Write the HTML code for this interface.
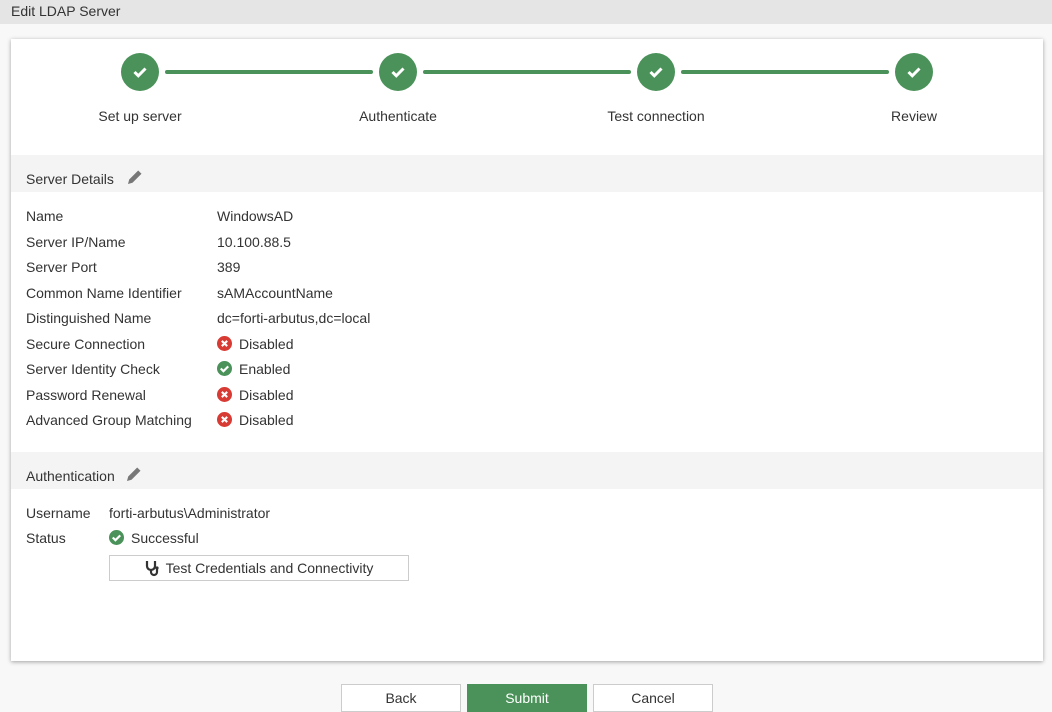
<!DOCTYPE html>
<html><head><style>
*{margin:0;padding:0;box-sizing:border-box}
body{width:1052px;height:712px;background:#f8f8f8;font-family:"Liberation Sans",sans-serif;font-size:14px;color:#333;position:relative;overflow:hidden}
.hdr{position:absolute;left:0;top:0;width:1052px;height:24px;background:#e5e5e5;padding:3px 11px;font-size:14px}
.card{position:absolute;left:11px;top:39px;width:1032px;height:622px;background:#fff;box-shadow:0 1px 4px rgba(0,0,0,.35)}
.circ{position:absolute;width:38px;height:38px;border-radius:50%;background:#4a9259;top:14px}
.circ svg{position:absolute;left:10px;top:10px}
.line{position:absolute;height:4px;background:#4a9259;top:31px;border-radius:2px}
.lbl{position:absolute;top:69px;width:200px;text-align:center;font-size:14px}
.sec{position:absolute;left:0;width:1032px;height:37px;background:#f4f4f4;padding:13px 15px 0;font-size:14px}
.row{position:absolute;font-size:14px}
.ic{display:inline-block;width:15px;height:15px;border-radius:50%;vertical-align:-2px;margin-right:7px;position:relative}
.btn{position:absolute;top:684px;width:120px;height:28px;border:1px solid #ccc;background:#fff;text-align:center;line-height:26px;font-size:14px}
</style></head><body>
<div class="hdr">Edit LDAP Server</div>
<div class="card">
<div class="line" style="left:154px;width:208px"></div>
<div class="line" style="left:412px;width:208px"></div>
<div class="line" style="left:670px;width:208px"></div>
<div class="circ" style="left:110px"><svg width="18" height="18" viewBox="0 0 18 18"><path d="M3.5 9l3.8 3.8L14.5 5.5" stroke="#fff" stroke-width="3" fill="none"/></svg></div>
<div class="circ" style="left:368px"><svg width="18" height="18" viewBox="0 0 18 18"><path d="M3.5 9l3.8 3.8L14.5 5.5" stroke="#fff" stroke-width="3" fill="none"/></svg></div>
<div class="circ" style="left:626px"><svg width="18" height="18" viewBox="0 0 18 18"><path d="M3.5 9l3.8 3.8L14.5 5.5" stroke="#fff" stroke-width="3" fill="none"/></svg></div>
<div class="circ" style="left:884px"><svg width="18" height="18" viewBox="0 0 18 18"><path d="M3.5 9l3.8 3.8L14.5 5.5" stroke="#fff" stroke-width="3" fill="none"/></svg></div>
<div class="lbl" style="left:29px">Set up server</div>
<div class="lbl" style="left:287px">Authenticate</div>
<div class="lbl" style="left:545px">Test connection</div>
<div class="lbl" style="left:803px">Review</div>

<div class="sec" style="top:116px">Server Details <svg width="18" height="18" viewBox="0 0 18 18" style="margin-left:8px;vertical-align:-2px"><path d="M2 16l1.2-4.5 9-9 3.3 3.3-9 9z" fill="#777"/></svg></div>
<div class="row" style="left:15px;top:165px;line-height:25.5px">Name<br>Server IP/Name<br>Server Port<br>Common Name Identifier<br>Distinguished Name<br>Secure Connection<br>Server Identity Check<br>Password Renewal<br>Advanced Group Matching</div>
<div class="row" style="left:206px;top:165px;line-height:25.5px">WindowsAD<br>10.100.88.5<br>389<br>sAMAccountName<br>dc=forti-arbutus,dc=local<br>
<span class="ic" style="background:#d83b34"><svg width="15" height="15" viewBox="0 0 14 14" style="position:absolute;left:0;top:0"><path d="M4.5 4.5l5 5M9.5 4.5l-5 5" stroke="#fff" stroke-width="2"/></svg></span>Disabled<br>
<span class="ic" style="background:#4a9259"><svg width="15" height="15" viewBox="0 0 14 14" style="position:absolute;left:0;top:0"><path d="M3.5 7l2.5 2.5 4.5-4.5" stroke="#fff" stroke-width="2" fill="none"/></svg></span>Enabled<br>
<span class="ic" style="background:#d83b34"><svg width="15" height="15" viewBox="0 0 14 14" style="position:absolute;left:0;top:0"><path d="M4.5 4.5l5 5M9.5 4.5l-5 5" stroke="#fff" stroke-width="2"/></svg></span>Disabled<br>
<span class="ic" style="background:#d83b34"><svg width="15" height="15" viewBox="0 0 14 14" style="position:absolute;left:0;top:0"><path d="M4.5 4.5l5 5M9.5 4.5l-5 5" stroke="#fff" stroke-width="2"/></svg></span>Disabled</div>

<div class="sec" style="top:413px">Authentication <svg width="18" height="18" viewBox="0 0 18 18" style="margin-left:6px;vertical-align:-2px"><path d="M2 16l1.2-4.5 9-9 3.3 3.3-9 9z" fill="#777"/></svg></div>
<div class="row" style="left:15px;top:462px;line-height:25px">Username<br>Status</div>
<div class="row" style="left:98px;top:462px;line-height:25px">forti-arbutus\Administrator<br><span class="ic" style="background:#4a9259"><svg width="15" height="15" viewBox="0 0 14 14" style="position:absolute;left:0;top:0"><path d="M3.5 7l2.5 2.5 4.5-4.5" stroke="#fff" stroke-width="2" fill="none"/></svg></span>Successful</div>
<div class="row" style="left:98px;top:516px;width:300px;height:26px;border:1px solid #ccc;text-align:center;line-height:24px"><svg width="16" height="18" viewBox="0 0 16 18" style="vertical-align:-4px;margin-right:5px"><path d="M2 2v5a4 4 0 0 0 8 0V2M6 11v2a3 3 0 0 0 6 0V10" stroke="#333" stroke-width="2.2" fill="none"/><circle cx="12" cy="9" r="1.6" fill="#333"/></svg>Test Credentials and Connectivity</div>
</div>
<div class="btn" style="left:341px">Back</div>
<div class="btn" style="left:467px;background:#4a9259;border-color:#4a9259;color:#fff">Submit</div>
<div class="btn" style="left:593px">Cancel</div>
</body></html>
